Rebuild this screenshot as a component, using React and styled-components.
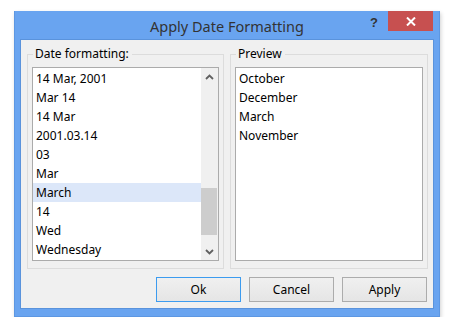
import React from "react";
import styled, { createGlobalStyle } from "styled-components";

const formats = [
  "14 Mar, 2001",
  "Mar 14",
  "14 Mar",
  "2001.03.14",
  "03",
  "Mar",
  "March",
  "14",
  "Wed",
  "Wednesday",
];

const preview = ["October", "December", "March", "November"];

const GlobalStyle = createGlobalStyle`
  body {
    margin: 0;
    background: #ffffff;
    font-family: "Segoe UI", "Noto Sans", "Liberation Sans", sans-serif;
  }
`;

const Page = styled.div`
  padding: 11px 0 0 14px;
`;

const Window = styled.div`
  width: 412px;
  background: #69a4f0;
  border: 1px solid #5d97e2;
  border-top: 0;
  padding: 0 6px 8px 6px;
  box-shadow: 1px 2px 4px rgba(0, 0, 0, 0.18);
`;

const TitleBar = styled.div`
  height: 29px;
  display: grid;
  grid-template-columns: 1fr auto 1fr;
  align-items: start;
`;

const Title = styled.div`
  grid-column: 2;
  font-size: 14.5px;
  line-height: 30px;
  color: #333333;
`;

const Controls = styled.div`
  display: flex;
  justify-content: flex-end;
  align-items: flex-start;
  gap: 10px;
`;

const Help = styled.span`
  font-family: "Liberation Sans", sans-serif;
  font-weight: bold;
  font-size: 13px;
  line-height: 20px;
  margin-top: 2px;
  color: #333333;
`;

const CloseButton = styled.div`
  width: 45px;
  height: 20px;
  background: #c75050;
  display: flex;
  align-items: center;
  justify-content: center;
`;

const Client = styled.div`
  background: #f0f0f0;
  box-shadow: 0 0 0 1px #5a93dc;
  padding: 6px 5px 6px 6px;
`;

const Groups = styled.div`
  display: grid;
  grid-template-columns: 197px 198px;
  gap: 6px;
`;

const Group = styled.fieldset`
  margin: 0;
  min-width: 0;
  border: 1px solid #dcdcdc;
  padding: 0 4px 7px 4px;
`;

const Legend = styled.legend`
  font-size: 12px;
  line-height: 16px;
  padding: 0 3px 0 2px;
  margin-left: 1px;
  color: #000000;
`;

const ListBox = styled.div`
  margin-top: 5px;
  height: 192px;
  border: 1px solid #ababab;
  background: #ffffff;
  display: flex;
`;

const Items = styled.div`
  flex: 1;
  padding: 1px 0;
`;

const Row = styled.div`
  height: 19px;
  line-height: 19px;
  padding-left: 3px;
  font-size: 12px;
  color: #000000;
  background: ${({ $selected }) => ($selected ? "#dce7f9" : "transparent")};
`;

const ScrollBar = styled.div`
  width: 17px;
  background: #f0f0f0;
  display: flex;
  flex-direction: column;
`;

const Arrow = styled.div`
  height: 17px;
  display: flex;
  align-items: center;
  justify-content: center;
`;

const Track = styled.div`
  flex: 1;
  display: flex;
  flex-direction: column;
  justify-content: flex-end;
  padding-bottom: 8px;
`;

const Thumb = styled.div`
  height: 47px;
  width: 16px;
  background: #cdcdcd;
`;

const ButtonRow = styled.div`
  display: flex;
  justify-content: flex-end;
  gap: 8px;
  margin-top: 8px;
  padding-right: 1px;
`;

const Button = styled.button`
  width: 85px;
  height: 25px;
  font-family: inherit;
  font-size: 12px;
  color: #000000;
  background: linear-gradient(#f0f0f0, #e5e5e5);
  border: 1px solid ${({ $default }) => ($default ? "#3c9bef" : "#acacac")};
  padding: 0;
`;

const Chevron = ({ up }) => (
  <svg width="9" height="6" viewBox="0 0 9 6">
    <path
      d={up ? "M1 5 L4.5 1.5 L8 5" : "M1 1 L4.5 4.5 L8 1"}
      fill="none"
      stroke="#606060"
      strokeWidth="1.8"
    />
  </svg>
);

export default function App() {
  return (
    <Page>
      <GlobalStyle />
      <Window>
        <TitleBar>
          <Title>Apply Date Formatting</Title>
          <Controls>
            <Help>?</Help>
            <CloseButton>
              <svg width="10" height="9" viewBox="0 0 10 9">
                <path d="M1 0.5 L9 8.5 M9 0.5 L1 8.5" stroke="#ffffff" strokeWidth="2" />
              </svg>
            </CloseButton>
          </Controls>
        </TitleBar>
        <Client>
          <Groups>
            <Group>
              <Legend>Date formatting:</Legend>
              <ListBox>
                <Items>
                  {formats.map((f) => (
                    <Row key={f} $selected={f === "March"}>
                      {f}
                    </Row>
                  ))}
                </Items>
                <ScrollBar>
                  <Arrow>
                    <Chevron up />
                  </Arrow>
                  <Track>
                    <Thumb />
                  </Track>
                  <Arrow>
                    <Chevron />
                  </Arrow>
                </ScrollBar>
              </ListBox>
            </Group>
            <Group>
              <Legend>Preview</Legend>
              <ListBox>
                <Items>
                  {preview.map((p) => (
                    <Row key={p}>{p}</Row>
                  ))}
                </Items>
              </ListBox>
            </Group>
          </Groups>
          <ButtonRow>
            <Button $default>Ok</Button>
            <Button>Cancel</Button>
            <Button>Apply</Button>
          </ButtonRow>
        </Client>
      </Window>
    </Page>
  );
}
